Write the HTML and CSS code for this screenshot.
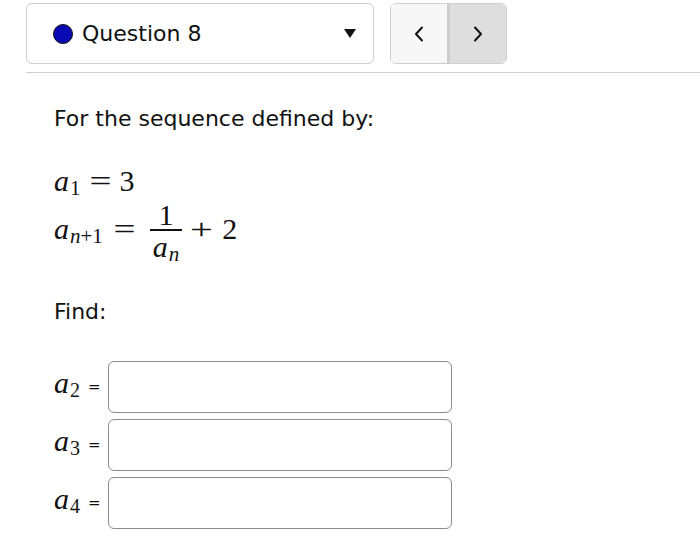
FILE: index.html
```html
<!DOCTYPE html>
<html>
<head>
<meta charset="utf-8">
<link rel="stylesheet" href="styles.css">
</head>
<body>
<div class="topbar">
  <div class="select">
    <span class="dot"></span>
    <span class="qlabel">Question 8</span>
    <span class="caret"></span>
  </div>
  <div class="nav">
    <div class="navbtn prev">
      <svg width="12" height="18" viewBox="0 0 12 18"><path d="M9 2.5 L3 9 L9 15.5" fill="none" stroke="#111" stroke-width="2" stroke-linecap="round" stroke-linejoin="round"/></svg>
    </div>
    <div class="navbtn next">
      <svg width="12" height="18" viewBox="0 0 12 18"><path d="M3 2.5 L9 9 L3 15.5" fill="none" stroke="#111" stroke-width="2" stroke-linecap="round" stroke-linejoin="round"/></svg>
    </div>
  </div>
</div>
<div class="rule"></div>
<div class="content">
  <p class="text intro">For the sequence defined by:</p>
  <div class="math">
    <div class="mrow r1"><span class="mi">a</span><span class="msub">1</span><span class="mo">=</span><span class="mn">3</span></div>
    <div class="mrow r2"><span class="mi">a</span><span class="msub"><span class="mi">n</span>+1</span><span class="mo">=</span><span class="frac"><span class="num">1</span><span class="bar"></span><span class="den"><span class="mi">a</span><span class="msub"><span class="mi">n</span></span></span></span><span class="mbin">+</span><span class="mn">2</span></div>
  </div>
  <p class="text find">Find:</p>
  <div class="answers">
    <div class="arow"><span class="alabel"><span class="mi">a</span><span class="msub">2</span></span><span class="eq">=</span><div class="box"></div></div>
    <div class="arow"><span class="alabel"><span class="mi">a</span><span class="msub">3</span></span><span class="eq">=</span><div class="box"></div></div>
    <div class="arow"><span class="alabel"><span class="mi">a</span><span class="msub">4</span></span><span class="eq">=</span><div class="box"></div></div>
  </div>
</div>
</body>
</html>
```
FILE: styles.css
```css
html, body {
  margin: 0;
  padding: 0;
  background: #fff;
}
body {
  font-family: "DejaVu Sans", Verdana, sans-serif;
  color: #111;
  width: 700px;
  height: 546px;
  overflow: hidden;
}
.topbar {
  display: flex;
  align-items: stretch;
  gap: 16px;
  padding: 3px 0 0 26px;
  height: 61px;
}
.select {
  width: 348px;
  border: 1px solid #cfcfcf;
  border-radius: 6px;
  display: flex;
  align-items: center;
  padding: 0 17px 0 26px;
  box-sizing: border-box;
}
.dot {
  width: 18px;
  height: 18px;
  border-radius: 50%;
  background: #0a0ab4;
  border: 1px solid #111;
  flex: none;
}
.qlabel {
  font-size: 22px;
  margin-left: 9px;
  flex: 1;
  color: #111;
}
.caret {
  width: 0;
  height: 0;
  border-left: 6.5px solid transparent;
  border-right: 6.5px solid transparent;
  border-top: 9px solid #111;
}
.nav {
  display: flex;
  width: 117px;
  border: 1px solid #cfcfcf;
  border-radius: 6px;
  overflow: hidden;
  box-sizing: border-box;
}
.navbtn {
  flex: 1;
  display: flex;
  align-items: center;
  justify-content: center;
}
.prev {
  background: #f7f7f7;
  border-right: 3px solid #cdcdcd;
}
.next {
  background: #dedede;
}
.rule {
  margin: 8px 0 0 26px;
  height: 1px;
  background: #cfcfcf;
}
.content {
  padding-left: 54px;
}
.text {
  margin: 0;
  font-size: 22px;
  line-height: 28px;
}
.intro {
  margin-top: 32px;
}
.math {
  font-family: "Liberation Serif", "DejaVu Serif", serif;
  font-size: 30px;
  line-height: 36px;
  margin-top: 30px;
}
.mrow {
  white-space: nowrap;
}
.r2 {
  margin-top: 1px;
}
.mi {
  font-style: italic;
}
.msub {
  font-size: 21px;
  position: relative;
  top: 4px;
  margin-left: 1px;
}
.mo {
  display: inline-block;
  transform: scaleX(1.3);
  margin: 0 11px 0 11px;
}
.r2 .mo {
  margin: 0 17px 0 13px;
}
.mn {
  display: inline-block;
}
.frac {
  display: inline-flex;
  flex-direction: column;
  align-items: stretch;
  vertical-align: 14px;
  text-align: center;
}
.num {
  line-height: 24px;
  padding-bottom: 2px;
}
.bar {
  height: 1.5px;
  background: #111;
}
.den {
  line-height: 28px;
  padding: 2px 3px 0;
}
.mbin {
  display: inline-block;
  transform: scaleX(1.35);
  margin: 0 12px 0 11px;
}
.find {
  margin-top: 34px;
}
.answers {
  margin-top: 35px;
  display: flex;
  flex-direction: column;
  gap: 6px;
}
.arow {
  display: flex;
  align-items: center;
}
.alabel {
  font-family: "Liberation Serif", "DejaVu Serif", serif;
  font-size: 30px;
  line-height: 32px;
  padding-bottom: 4px;
  width: 34px;
  white-space: nowrap;
}
.alabel .msub {
  font-size: 20px;
}
.eq {
  font-size: 15px;
  width: 20px;
}
.box {
  width: 344px;
  height: 52px;
  border: 1.5px solid #8c8c8c;
  border-radius: 6px;
  box-sizing: border-box;
}
```
